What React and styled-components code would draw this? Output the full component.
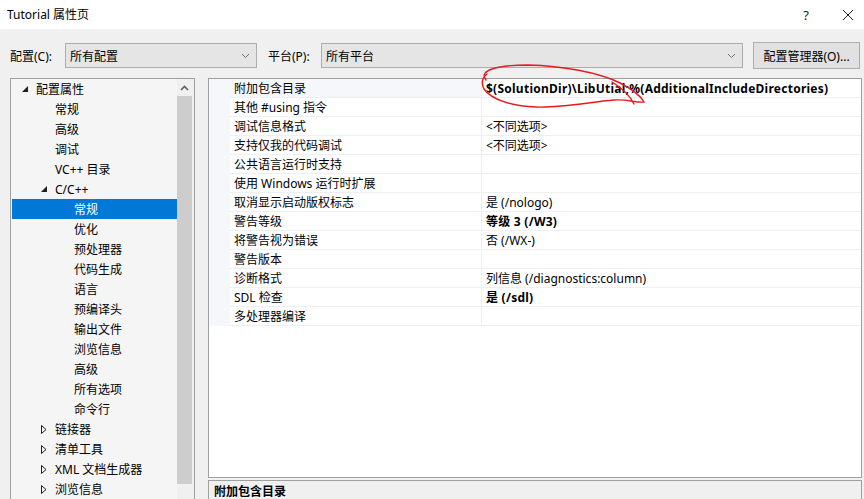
import React from 'react';
import styled, { createGlobalStyle } from 'styled-components';

const GlobalStyle = createGlobalStyle`
  html, body {
    margin: 0;
    padding: 0;
    background: #f0f0f0;
  }
  * {
    box-sizing: border-box;
  }
`;

const Window = styled.div`
  position: relative;
  width: 864px;
  height: 499px;
  overflow: hidden;
  background: #f0f0f0;
  font-family: "Noto Sans", "Noto Sans CJK SC", sans-serif;
  font-size: 12px;
  color: #000;
  display: flex;
  flex-direction: column;
`;

const TitleBar = styled.div`
  height: 29px;
  flex: none;
  background: #fff;
  display: flex;
  align-items: center;
  padding: 0 9px 0 7px;
`;

const TitleText = styled.div`
  flex: 1;
  font-size: 12px;
  margin-top: -2px;
`;

const TitleIcon = styled.div`
  width: 14px;
  display: flex;
  justify-content: center;
  margin-left: ${p => p.gap || 0}px;
  font-size: 13px;
  color: #222;
`;

const Toolbar = styled.div`
  height: 49px;
  flex: none;
  display: flex;
  align-items: center;
  padding: 4px 0 0 10px;
`;

const FieldLabel = styled.div`
  width: ${p => p.w}px;
  flex: none;
`;

const Select = styled.div`
  width: ${p => p.w}px;
  height: 25px;
  flex: none;
  background: #e5e5e5;
  border: 1px solid #adadad;
  display: flex;
  align-items: center;
  padding: 0 6px 0 4px;
  margin-right: ${p => p.mr || 0}px;
`;

const SelectValue = styled.div`
  flex: 1;
`;

const ManagerButton = styled.div`
  width: 107px;
  height: 27px;
  flex: none;
  background: #e1e1e1;
  border: 1px solid #adadad;
  display: flex;
  align-items: center;
  justify-content: center;
`;

const Body = styled.div`
  flex: 1;
  display: flex;
  padding-left: 10px;
  gap: 13px;
  min-height: 0;
`;

const TreePanel = styled.div`
  width: 185px;
  height: 440px;
  flex: none;
  background: #f5f5f5;
  border: 1px solid #a0a0a0;
  display: flex;
`;

const TreeList = styled.div`
  flex: 1;
  padding: 0 0 0 1px;
  display: flex;
  flex-direction: column;
`;

const TreeRow = styled.div`
  height: 20px;
  flex: none;
  display: flex;
  align-items: center;
  padding-left: ${p => 10 + p.level * 19}px;
  background: ${p => (p.selected ? '#0078d7' : 'transparent')};
  color: ${p => (p.selected ? '#fff' : '#000')};
`;

const Expander = styled.div`
  width: 14px;
  height: 20px;
  flex: none;
  display: flex;
  align-items: center;
`;

const Scrollbar = styled.div`
  width: 17px;
  flex: none;
  background: #f0f0f0;
  display: flex;
  flex-direction: column;
`;

const ScrollArrow = styled.div`
  height: 17px;
  display: flex;
  align-items: center;
  justify-content: center;
  padding-right: 2px;
`;

const ScrollThumb = styled.div`
  width: 15px;
  height: 388px;
  background: #cdcdcd;
`;

const RightColumn = styled.div`
  width: 654px;
  flex: none;
  display: flex;
  flex-direction: column;
  gap: 2px;
`;

const Grid = styled.div`
  height: 400px;
  flex: none;
  background: #fff;
  border: 1px solid #a0a0a0;
  display: flex;
  flex-direction: column;
`;

const GridRow = styled.div`
  height: 19px;
  flex: none;
  display: flex;
`;

const MarginCell = styled.div`
  width: 21px;
  flex: none;
  background: #f5f7fa;
`;

const NameCell = styled.div`
  width: 252px;
  flex: none;
  padding-left: 4px;
  display: flex;
  align-items: center;
  background: ${p => (p.active ? '#f5f7fa' : '#fff')};
  border-right: 1px solid #edeff3;
  border-bottom: 1px solid #edeff3;
`;

const ValueCell = styled.div`
  flex: 1;
  padding-left: 4px;
  display: flex;
  align-items: center;
  white-space: nowrap;
  font-weight: ${p => (p.bold ? 700 : 400)};
  border-bottom: 1px solid #edeff3;
  letter-spacing: ${p => (p.bold ? '0.25px' : '0')};
`;

const Description = styled.div`
  height: 60px;
  flex: none;
  background: #f0f0f0;
  border: 1px solid #a0a0a0;
  padding: 1px 0 0 5px;
  font-weight: 700;
`;

const Annotation = styled.svg`
  position: absolute;
  left: 0;
  top: 0;
  pointer-events: none;
`;

const Chevron = ({ up }) => (
  <svg width="9" height="6" viewBox="0 0 9 6">
    <path
      d={up ? 'M1 5 L4.5 1.5 L8 5' : 'M1 1 L4.5 4.5 L8 1'}
      fill="none"
      stroke={up ? '#606060' : '#707070'}
      strokeWidth={up ? 1.6 : 1}
    />
  </svg>
);

const ExpandedIcon = () => (
  <svg width="6" height="6" viewBox="0 0 6 6">
    <path d="M6 0 L6 6 L0 6 Z" fill="#1e1e1e" />
  </svg>
);

const CollapsedIcon = () => (
  <svg width="6" height="9" viewBox="0 0 6 9">
    <path d="M0.5 0.5 L5 4.5 L0.5 8.5 Z" fill="none" stroke="#1e1e1e" />
  </svg>
);

const treeItems = [
  { label: '配置属性', level: 0, icon: 'open' },
  { label: '常规', level: 1 },
  { label: '高级', level: 1 },
  { label: '调试', level: 1 },
  { label: 'VC++ 目录', level: 1 },
  { label: 'C/C++', level: 1, icon: 'open' },
  { label: '常规', level: 2, selected: true },
  { label: '优化', level: 2 },
  { label: '预处理器', level: 2 },
  { label: '代码生成', level: 2 },
  { label: '语言', level: 2 },
  { label: '预编译头', level: 2 },
  { label: '输出文件', level: 2 },
  { label: '浏览信息', level: 2 },
  { label: '高级', level: 2 },
  { label: '所有选项', level: 2 },
  { label: '命令行', level: 2 },
  { label: '链接器', level: 1, icon: 'closed' },
  { label: '清单工具', level: 1, icon: 'closed' },
  { label: 'XML 文档生成器', level: 1, icon: 'closed' },
  { label: '浏览信息', level: 1, icon: 'closed' },
];

const properties = [
  { name: '附加包含目录', value: '$(SolutionDir)\\LibUtial;%(AdditionalIncludeDirectories)', bold: true },
  { name: '其他 #using 指令', value: '' },
  { name: '调试信息格式', value: '<不同选项>' },
  { name: '支持仅我的代码调试', value: '<不同选项>' },
  { name: '公共语言运行时支持', value: '' },
  { name: '使用 Windows 运行时扩展', value: '' },
  { name: '取消显示启动版权标志', value: '是 (/nologo)' },
  { name: '警告等级', value: '等级 3 (/W3)', bold: true },
  { name: '将警告视为错误', value: '否 (/WX-)' },
  { name: '警告版本', value: '' },
  { name: '诊断格式', value: '列信息 (/diagnostics:column)' },
  { name: 'SDL 检查', value: '是 (/sdl)', bold: true },
  { name: '多处理器编译', value: '' },
];

const App = () => {
  return (
    <Window>
      <GlobalStyle />
      <TitleBar>
        <TitleText>Tutorial 属性页</TitleText>
        <TitleIcon>?</TitleIcon>
        <TitleIcon gap={28}>
          <svg width="12" height="12" viewBox="0 0 12 12">
            <path d="M1 1 L11 11 M11 1 L1 11" stroke="#222" strokeWidth="1" />
          </svg>
        </TitleIcon>
      </TitleBar>

      <Toolbar>
        <FieldLabel w={55}>配置(C):</FieldLabel>
        <Select w={192} mr={11}>
          <SelectValue>所有配置</SelectValue>
          <Chevron />
        </Select>
        <FieldLabel w={53}>平台(P):</FieldLabel>
        <Select w={422} mr={10}>
          <SelectValue>所有平台</SelectValue>
          <Chevron />
        </Select>
        <ManagerButton>配置管理器(O)...</ManagerButton>
      </Toolbar>

      <Body>
        <TreePanel>
          <TreeList>
            {treeItems.map((item, i) => (
              <TreeRow key={i} level={item.level} selected={item.selected}>
                <Expander>
                  {item.icon === 'open' && <ExpandedIcon />}
                  {item.icon === 'closed' && <CollapsedIcon />}
                </Expander>
                {item.label}
              </TreeRow>
            ))}
          </TreeList>
          <Scrollbar>
            <ScrollArrow>
              <Chevron up />
            </ScrollArrow>
            <ScrollThumb />
          </Scrollbar>
        </TreePanel>

        <RightColumn>
          <Grid>
            {properties.map((prop, i) => (
              <GridRow key={i}>
                <MarginCell />
                <NameCell active={i === 0}>{prop.name}</NameCell>
                <ValueCell bold={prop.bold}>{prop.value}</ValueCell>
              </GridRow>
            ))}
          </Grid>
          <Description>附加包含目录</Description>
        </RightColumn>
      </Body>

      <Annotation width="864" height="499" viewBox="0 0 864 499">
        <path
          d="M486 80 C478 70 498 65 528 65 C562 66 598 72 620 83 C632 89 640 95 644 102
             C636 103 628 99 614 100 C590 102 562 108 536 107 C510 106 491 99 484 89
             C481 83 482 78 487 74
             M612 82 C622 88 630 96 634 104"
          fill="none"
          stroke="#e8191c"
          strokeWidth="1.4"
          strokeLinecap="round"
        />
      </Annotation>
    </Window>
  );
};

export default App;
